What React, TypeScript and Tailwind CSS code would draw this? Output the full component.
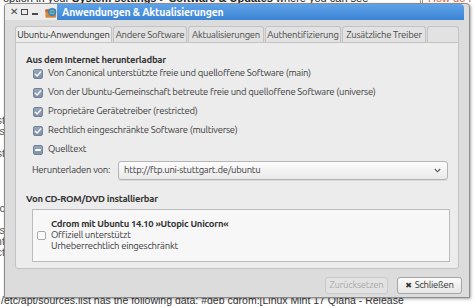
import React from 'react';

type CheckState = 'on' | 'mixed' | 'off';

const Check: React.FC<{ state: CheckState }> = ({ state }) => {
  if (state === 'off') {
    return <div className="w-[9px] h-[9px] rounded-[2px] border border-[#a9a9a9] bg-[#fbfbfb] shrink-0" />;
  }
  return (
    <div className="w-[10px] h-[10px] rounded-[2px] bg-gradient-to-b from-[#97a7bd] to-[#7f90a8] border border-[#71829b] flex items-center justify-center shrink-0">
      {state === 'on' ? (
        <svg width="8" height="8" viewBox="0 0 8 8">
          <path d="M1.3 4.2 L3.2 6 L6.7 1.9" fill="none" stroke="#fff" strokeWidth="1.4" strokeLinecap="round" strokeLinejoin="round" />
        </svg>
      ) : (
        <div className="w-[6px] h-[2px] bg-white rounded-full" />
      )}
    </div>
  );
};

const sources: { label: string; state: CheckState }[] = [
  { label: 'Von Canonical unterstützte freie und quelloffene Software (main)', state: 'on' },
  { label: 'Von der Ubuntu-Gemeinschaft betreute freie und quelloffene Software (universe)', state: 'on' },
  { label: 'Proprietäre Gerätetreiber (restricted)', state: 'on' },
  { label: 'Rechtlich eingeschränkte Software (multiverse)', state: 'on' },
  { label: 'Quelltext', state: 'mixed' },
];

const tabs = [
  { label: 'Ubuntu-Anwendungen', w: 'w-[97px]', active: true },
  { label: 'Andere Software', w: 'w-[74px]', active: false },
  { label: 'Aktualisierungen', w: 'w-[76px]', active: false },
  { label: 'Authentifizierung', w: 'w-[76px]', active: false },
  { label: 'Zusätzliche Treiber', w: 'w-[84px]', active: false },
];

const leftFragments = ['', '', '', '', '', 'st', 'ls', '', 'ist', '', '', '', '', 'c', '', 'ls', 'nt', 'ct'];
const rightFragments = ['How do I fix', '', 'sh', 'Learn', 'ea', 'te', '', 'e', '', '', 'Th', 'co', 'ho', '', 'an', 'aa', 'Be', '', 'se', 'ra', 'du', 'wi', 'Qa', 'ea', 'pe', 'ng'];

const App: React.FC = () => {
  return (
    <div className="relative w-[474px] h-[307px] overflow-hidden bg-white font-['Ubuntu','Noto_Sans','DejaVu_Sans',sans-serif] text-[#3c3c3c]">
      {/* page behind the dialog */}
      <div className="absolute left-[3px] top-[-8px] whitespace-nowrap text-[11px] leading-[12px] text-[#222] font-['Liberation_Sans',sans-serif]">
        option in your <span className="font-bold underline">System settings &gt; Software &amp; Updates</span> where you can see
      </div>
      <div className="absolute left-[420px] top-0 w-[3px] h-[6px] border-x border-[#b58a7a]" />
      <div className="absolute left-0 top-[60px] w-[5px] overflow-hidden flex flex-col text-[11px] leading-[11px] text-[#555] font-['Liberation_Sans',sans-serif]">
        {leftFragments.map((t, i) => (
          <div key={i} className="h-[11px] flex justify-end whitespace-nowrap">{t}</div>
        ))}
      </div>
      <div className="absolute left-[428px] top-[-7px] w-[60px] flex flex-col text-[11px] leading-[11px] text-[#d9653a] font-['Liberation_Sans',sans-serif]">
        {rightFragments.map((t, i) => (
          <div key={i} className="h-[11px] whitespace-nowrap">{t}</div>
        ))}
      </div>
      <div className="absolute left-[1px] top-[294px] whitespace-nowrap text-[10.5px] leading-[12px] text-[#333] font-['Liberation_Sans',sans-serif]">
        /etc/apt/sources.list has the following data: #deb cdrom:[Linux Mint 17 Qiana - Release
      </div>

      {/* dialog window */}
      <div className="absolute left-[4px] top-[3px] w-[466px] h-[295px] bg-[#dcdcdc] border border-[#8c8c8c] rounded-t-[4px] shadow-[1px_1px_3px_rgba(0,0,0,0.35)] flex flex-col text-[9.5px] tracking-[-0.25px]">
        <div className="h-[16px] flex items-stretch shrink-0">
          <div className="w-[52px] bg-[#ececec] flex items-center pl-[5px] gap-[4px] rounded-tl-[3px] tracking-normal">
            <span className="text-[10px] font-bold text-[#4a4a4a] leading-none w-[7px]">✕</span>
            <span className="w-[7px] h-[6px] border-[1.5px] border-[#4a4a4a]" />
            <span className="w-[6px] h-[2px] bg-[#4a4a4a] mt-[4px]" />
            <svg width="13" height="13" viewBox="0 0 14 13" className="ml-[3px]">
              <rect x="0.5" y="3" width="12" height="9.5" rx="1.5" fill="#d9883a" />
              <rect x="0.5" y="3" width="12" height="3" fill="#b9652a" />
              <circle cx="8" cy="6" r="4.3" fill="#3f8fd0" stroke="#2a6aa8" strokeWidth="0.6" />
              <path d="M5.6 5 Q8 3.4 10.4 5 M5.2 7 Q8 8.4 10.8 7" stroke="#8fd06a" strokeWidth="1" fill="none" />
            </svg>
          </div>
          <div className="flex-1 mr-[5px] bg-gradient-to-b from-[#5ea2e8] to-[#3b83d3] rounded-tr-[4px] flex items-center pl-[5px] text-white text-[10.5px] tracking-[-0.2px] font-bold leading-none">
            Anwendungen &amp; Aktualisierungen
          </div>
        </div>

        <div className="flex-1 flex flex-col pt-[6px] pl-[10px] pr-[10px]">
          {/* tabs */}
          <div className="flex h-[16px] leading-none">
            {tabs.map((t) => (
              <div
                key={t.label}
                className={`${t.w} mr-[1px] rounded-t-[3px] border border-b-0 border-[#c3c3c3] flex items-center justify-center whitespace-nowrap ${t.active ? 'bg-[#ececec] text-[#333]' : 'bg-[#e2e2e2] text-[#4a4a4a]'}`}
              >
                {t.label}
              </div>
            ))}
            <div className="flex-1 rounded-t-[3px] border border-b-0 border-[#c3c3c3] bg-[#e2e2e2]" />
          </div>

          {/* notebook panel */}
          <div className="h-[227px] bg-[#ececec] border border-[#c3c3c3] rounded-b-[3px] flex flex-col pt-[10px] pl-[10px]">
            <div className="h-[14px] leading-[14px] font-bold text-[#333]">Aus dem Internet herunterladbar</div>
            <div className="flex flex-col mt-[-3px] pl-[7px]">
              {sources.map((s) => (
                <div key={s.label} className="h-[19px] flex items-center gap-[5px] whitespace-nowrap">
                  <Check state={s.state} />
                  <span>{s.label}</span>
                </div>
              ))}
            </div>

            <div className="flex items-center mt-[2px] pl-[6px]">
              <span className="w-[86px] whitespace-nowrap">Herunterladen von:</span>
              <div className="w-[330px] h-[19px] rounded-[3px] border border-[#b4b4b4] bg-gradient-to-b from-[#fdfdfd] to-[#e9e9e9] flex items-center justify-between pl-[5px] pr-[6px] shadow-[0_1px_0_rgba(0,0,0,0.08)]">
                <span>http://ftp.uni-stuttgart.de/ubuntu</span>
                <svg width="7" height="5" viewBox="0 0 7 5">
                  <path d="M0.8 1 L3.5 3.8 L6.2 1" fill="none" stroke="#555" strokeWidth="1.1" />
                </svg>
              </div>
            </div>

            <div className="h-[14px] leading-[14px] font-bold text-[#333] mt-[12px]">Von CD-ROM/DVD installierbar</div>

            <div className="ml-[6px] mt-[3px] w-[418px] h-[53px] bg-[#f7f7f7] border border-[#bcbcbc] flex items-center pl-[4px] gap-[5px]">
              <Check state="off" />
              <div className="flex flex-col leading-[11px] mb-[2px]">
                <span className="font-bold text-[#333]">Cdrom mit Ubuntu 14.10 »Utopic Unicorn«</span>
                <span>Offiziell unterstützt</span>
                <span>Urheberrechtlich eingeschränkt</span>
              </div>
            </div>
          </div>

          {/* buttons */}
          <div className="flex justify-end gap-[9px] mt-[8px] mr-[-3px]">
            <div className="w-[63px] h-[17px] rounded-[3px] border border-[#cacaca] bg-[#e2e2e2] text-[#aaaaaa] flex items-center justify-center">
              Zurücksetzen
            </div>
            <div className="w-[65px] h-[17px] rounded-[3px] border border-[#a5a5a5] bg-gradient-to-b from-[#fbfbfb] to-[#e6e6e6] text-[#333] flex items-center justify-center gap-[3px]">
              <span className="text-[8px] font-bold">✖</span>
              <span>Schließen</span>
            </div>
          </div>
        </div>
      </div>
    </div>
  );
};

export default App;
